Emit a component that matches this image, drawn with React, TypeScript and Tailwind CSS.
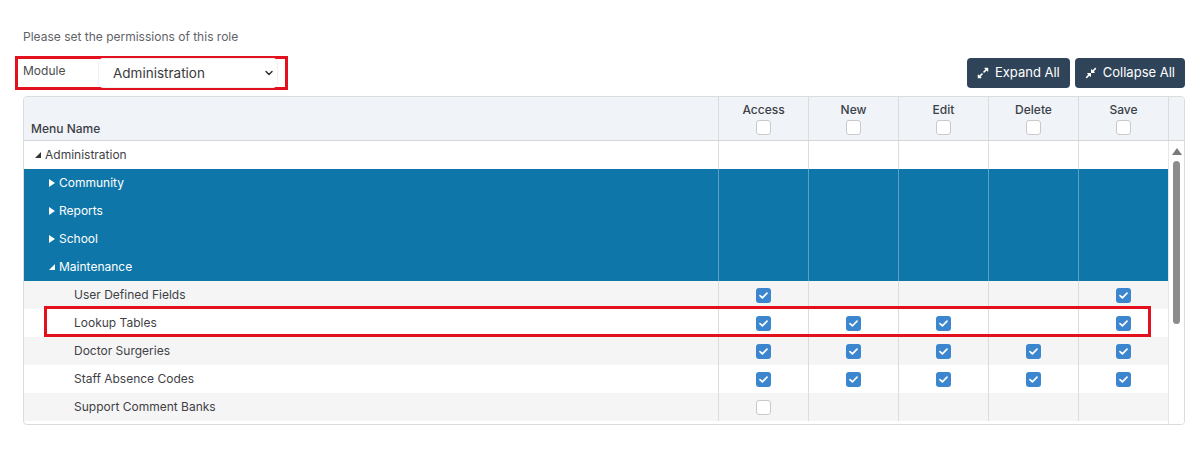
import { ChevronDown } from "lucide-react";
import { FaExpandAlt, FaCompressAlt } from "react-icons/fa";

type Perm = boolean | null;

interface Row {
  label: string;
  level: 0 | 1 | 2;
  kind: "open" | "closed" | "leaf";
  band: "white" | "blue" | "grey";
  perms?: Perm[];
}

const rows: Row[] = [
  { label: "Administration", level: 0, kind: "open", band: "white" },
  { label: "Community", level: 1, kind: "closed", band: "blue" },
  { label: "Reports", level: 1, kind: "closed", band: "blue" },
  { label: "School", level: 1, kind: "closed", band: "blue" },
  { label: "Maintenance", level: 1, kind: "open", band: "blue" },
  { label: "User Defined Fields", level: 2, kind: "leaf", band: "grey", perms: [true, null, null, null, true] },
  { label: "Lookup Tables", level: 2, kind: "leaf", band: "white", perms: [true, true, true, null, true] },
  { label: "Doctor Surgeries", level: 2, kind: "leaf", band: "grey", perms: [true, true, true, true, true] },
  { label: "Staff Absence Codes", level: 2, kind: "leaf", band: "white", perms: [true, true, true, true, true] },
  { label: "Support Comment Banks", level: 2, kind: "leaf", band: "grey", perms: [false, null, null, null, null] },
];

const columns = ["Access", "New", "Edit", "Delete", "Save"];

function Checkbox({ checked }: { checked: boolean }) {
  if (checked) {
    return (
      <span className="w-[15px] h-[15px] rounded-[3px] bg-[#3b86cf] flex items-center justify-center">
        <svg width="9" height="7" viewBox="0 0 9 7" fill="none">
          <path d="M1 3.6 L3.4 5.8 L8 1.2" stroke="white" strokeWidth="1.7" strokeLinecap="round" strokeLinejoin="round" />
        </svg>
      </span>
    );
  }
  return <span className="w-[15px] h-[15px] rounded-[3px] bg-white border border-[#c9c9c9]" />;
}

function Caret({ open, light }: { open: boolean; light: boolean }) {
  const fill = light ? "#ffffff" : "#333333";
  if (open) {
    return (
      <svg width="6" height="6" viewBox="0 0 6 6" className="mr-[4px]">
        <path d="M6 0 L6 6 L0 6 Z" fill={fill} />
      </svg>
    );
  }
  return (
    <svg width="6" height="8" viewBox="0 0 6 8" className="mr-[4px]">
      <path d="M0 0 L6 4 L0 8 Z" fill={fill} />
    </svg>
  );
}

export default function App() {
  return (
    <div className="w-[1200px] h-[472px] bg-white pl-[15px] pr-[15px] pt-[29px] font-['Inter',sans-serif] text-[#3f3f46]">
      <p className="pl-[8px] text-[12px] leading-[16px] text-[#5f6368]">Please set the permissions of this role</p>

      <div className="mt-[11px] flex items-start justify-between">
        <div className="w-[273px] h-[34px] border-[3px] border-[#e3101d] flex items-center pl-[5px] pr-[8px]">
          <span className="w-[76px] text-[12px] text-[#4b4b4b] self-start mt-[3px]">Module</span>
          <div className="flex-1 h-[28px] rounded-[4px] bg-white shadow-[0_0_0_1px_#f0f0f0] flex items-center justify-between pl-[14px] pr-[2px]">
            <span className="text-[13.5px] text-[#3a3a3a]">Administration</span>
            <ChevronDown size={12} strokeWidth={3} className="text-[#333]" />
          </div>
        </div>

        <div className="flex gap-[5px] mt-[2px]">
          <button className="h-[30px] px-[10px] rounded-[4px] bg-[#2f4459] text-white text-[13px] flex items-center gap-[6px]">
            <FaExpandAlt size={12} />
            Expand All
          </button>
          <button className="h-[30px] px-[10px] rounded-[4px] bg-[#2f4459] text-white text-[13px] flex items-center gap-[6px]">
            <FaCompressAlt size={12} />
            Collapse All
          </button>
        </div>
      </div>

      <div className="relative ml-[8px] mt-[6px] w-[1162px] border border-[#dcdcdc] rounded-[4px] overflow-hidden">
        {/* header */}
        <div className="flex h-[44px] bg-[#f0f3f8] border-b border-[#d6d6d6]">
          <div className="w-[694px] flex items-end pl-[7px] pb-[2px] text-[12px] font-medium text-[#3b3f47]">Menu Name</div>
          {columns.map((c) => (
            <div key={c} className="w-[90px] border-l border-[#dcdcdc] flex flex-col items-center pt-[6px] gap-[3px]">
              <span className="text-[12px] leading-[14px] font-medium text-[#3b3f47]">{c}</span>
              <Checkbox checked={false} />
            </div>
          ))}
          <div className="flex-1 border-l border-[#dcdcdc]" />
        </div>

        {/* body */}
        <div className="flex h-[283px] overflow-hidden">
          <div className="w-[1144px]">
            {rows.map((r) => {
              const bg = r.band === "blue" ? "bg-[#0f76a9]" : r.band === "grey" ? "bg-[#f5f5f5]" : "bg-white";
              const pad = r.level === 0 ? "pl-[11px]" : r.level === 1 ? "pl-[25px]" : "pl-[50px]";
              const light = r.band === "blue";
              return (
                <div key={r.label} className={`flex h-[28px] ${bg}`}>
                  <div className={`w-[694px] flex items-center ${pad} text-[12px] ${light ? "text-white" : "text-[#3f3f46]"}`}>
                    {r.kind !== "leaf" && <Caret open={r.kind === "open"} light={light} />}
                    <span>{r.label}</span>
                  </div>
                  {columns.map((c, i) => {
                    const p = r.perms ? r.perms[i] : null;
                    return (
                      <div
                        key={c}
                        className={`w-[90px] border-l ${light ? "border-[#5f9fc4]" : "border-[#dcdcdc]"} flex items-center justify-center`}
                      >
                        {p !== null && p !== undefined && <Checkbox checked={p} />}
                      </div>
                    );
                  })}
                </div>
              );
            })}
          </div>
          {/* scrollbar */}
          <div className="flex-1 border-l border-[#e6e6e6] bg-white flex flex-col items-center pt-[7px]">
            <svg width="10" height="7" viewBox="0 0 10 7">
              <path d="M5 0 L10 7 L0 7 Z" fill="#7a7a7a" />
            </svg>
            <div className="mt-[6px] w-[7px] h-[163px] rounded-full bg-[#8c8c8c]" />
          </div>
        </div>

        {/* highlight around Lookup Tables */}
        <div className="absolute left-[20px] top-[209px] w-[1107px] h-[31px] border-[3px] border-[#e3101d] pointer-events-none" />
      </div>
    </div>
  );
}
